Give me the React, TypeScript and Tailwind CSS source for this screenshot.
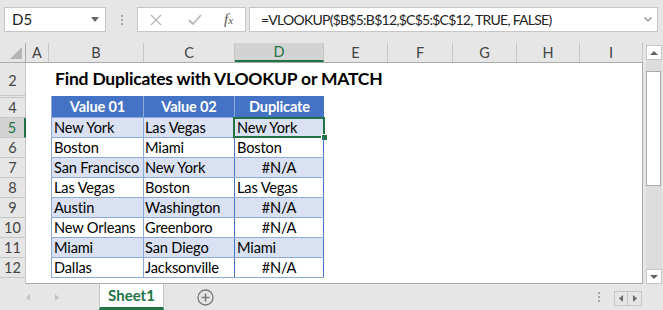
import React from 'react';

type Row = [string, string, string | null];

const rows: Row[] = [
  ['New York', 'Las Vegas', 'New York'],
  ['Boston', 'Miami', 'Boston'],
  ['San Francisco', 'New York', null],
  ['Las Vegas', 'Boston', 'Las Vegas'],
  ['Austin', 'Washington', null],
  ['New Orleans', 'Greenboro', null],
  ['Miami', 'San Diego', 'Miami'],
  ['Dallas', 'Jacksonville', null],
];

const columns = [
  { label: 'A', width: 'w-[23px]' },
  { label: 'B', width: 'w-[95px]' },
  { label: 'C', width: 'w-[91px]' },
  { label: 'D', width: 'w-[89px]' },
  { label: 'E', width: 'w-[64px]' },
  { label: 'F', width: 'w-[65px]' },
  { label: 'G', width: 'w-[64px]' },
  { label: 'H', width: 'w-[63px]' },
  { label: 'I', width: 'w-[63px]' },
];

function FormulaBar() {
  return (
    <div className="h-[43px] flex items-start pt-[7px] pl-[4px] pr-[5px]">
      <div className="w-[102px] h-[25px] bg-white border border-[#c6c6c6] flex items-center justify-between pl-[7px] pr-[6px]">
        <span className="text-[15px] text-[#222]">D5</span>
        <svg width="8" height="5" viewBox="0 0 8 5">
          <path d="M0 0h8L4 5z" fill="#666" />
        </svg>
      </div>
      <div className="w-[31px] h-[25px] flex flex-col items-center justify-center gap-[2px]">
        <span className="w-[2px] h-[2px] bg-[#a6a6a6]" />
        <span className="w-[2px] h-[2px] bg-[#a6a6a6]" />
        <span className="w-[2px] h-[2px] bg-[#a6a6a6]" />
      </div>
      <div className="w-[109px] h-[25px] bg-white border border-[#c6c6c6] flex items-center pl-[12px]">
        <svg width="12" height="12" viewBox="0 0 12 12">
          <path d="M1 1l10 10M11 1L1 11" stroke="#b8b8b8" strokeWidth="1.3" />
        </svg>
        <svg className="ml-[26px]" width="14" height="11" viewBox="0 0 14 11">
          <path d="M1 6l4 4 8-9" stroke="#b8b8b8" strokeWidth="1.8" fill="none" />
        </svg>
        <span className="ml-[22px] font-['Liberation_Serif',serif] italic text-[15px] text-[#555] leading-none">
          f<span className="text-[11px]">x</span>
        </span>
      </div>
      <div className="ml-[3px] flex-1 h-[25px] bg-white border border-[#c6c6c6] flex items-center justify-between pl-[11px] pr-[5px]">
        <span className="text-[14px] text-[#222] tracking-[-0.75px]">=VLOOKUP($B$5:B$12,$C$5:$C$12, TRUE, FALSE)</span>
        <svg width="8" height="5" viewBox="0 0 8 5">
          <path d="M0.5 0.5L4 4l3.5-3.5" stroke="#888" strokeWidth="1.2" fill="none" />
        </svg>
      </div>
    </div>
  );
}

function ColumnHeader() {
  return (
    <div className="h-[20px] flex border-b border-[#ababab]">
      <div className="w-[26px] border-r border-[#ababab] relative">
        <svg className="absolute left-[10px] top-[4px]" width="12" height="12" viewBox="0 0 12 12">
          <path d="M12 0v12H0z" fill="#b4b4b4" />
        </svg>
      </div>
      {columns.map(c => (
        <div
          key={c.label}
          className={`${c.width} flex items-center justify-center text-[14.5px] border-r border-[#c6c6c6] ${
            c.label === 'D'
              ? 'bg-[#d3d3d3] text-[#217346] border-b-2 border-b-[#217346]'
              : 'text-[#444]'
          }`}
        >
          {c.label}
        </div>
      ))}
    </div>
  );
}

function RowHeaders() {
  const labels = ['5', '6', '7', '8', '9', '10', '11', '12'];
  return (
    <div className="w-[26px] flex flex-col text-[14.5px] text-[#444]">
      <div className="h-[33px] border-b border-r border-[#c6c6c6] flex items-end justify-center pb-[3px]">2</div>
      <div className="h-[2px] border-b border-r border-[#c6c6c6]" />
      <div className="h-[20px] border-b border-r border-[#c6c6c6] flex items-center justify-center">4</div>
      {labels.map(l => (
        <div
          key={l}
          className={`h-[20px] border-b border-[#c6c6c6] flex items-center justify-center ${
            l === '5' ? 'bg-[#d3d3d3] text-[#217346] border-r-2 border-r-[#217346]' : 'border-r'
          }`}
        >
          {l}
        </div>
      ))}
      <div className="flex-1 border-r border-[#c6c6c6]" />
    </div>
  );
}

function DataTable() {
  return (
    <div className="ml-[25px] w-[273px] border-l border-[#8ea9db] text-[14.6px] tracking-[-0.15px] text-black">
      <div className="h-[22px] flex bg-[#4472c4] text-white font-bold border-b border-[#8ea9db]">
        <div className="w-[92px] border-r border-[#8ea9db] flex items-center justify-center">Value 01</div>
        <div className="w-[91px] border-r border-[#8ea9db] flex items-center justify-center">Value 02</div>
        <div className="w-[89px] flex items-center justify-center">Duplicate</div>
      </div>
      {rows.map(([b, c, d], i) => (
        <div
          key={i}
          className={`h-[20px] flex border-b border-[#8ea9db] ${i % 2 === 0 ? 'bg-[#d9e1f2]' : 'bg-white'}`}
        >
          <div className="w-[92px] border-r border-[#8ea9db] flex items-center pl-[2px] whitespace-nowrap">{b}</div>
          <div className="w-[91px] border-r border-[#4472c4] flex items-center pl-[1px] whitespace-nowrap">{c}</div>
          <div
            className={`w-[89px] border-r border-[#4472c4] flex items-center relative ${
              d === null ? 'justify-center' : 'pl-[2px]'
            }`}
          >
            {d ?? '#N/A'}
            {i === 0 && (
              <div className="absolute left-[-2px] top-[-1px] w-[92px] h-[21px] border-2 border-[#217346]">
                <div className="absolute right-[-5px] bottom-[-5px] w-[7px] h-[7px] bg-[#217346] border border-white" />
              </div>
            )}
          </div>
        </div>
      ))}
    </div>
  );
}

function VerticalScrollbar() {
  return (
    <div className="ml-[3px] w-[16px] pt-[2px] flex flex-col">
      <div className="h-[15px] bg-white border border-[#c6c6c6] flex items-center justify-center">
        <svg width="8" height="4" viewBox="0 0 8 4">
          <path d="M0 4h8L4 0z" fill="#606060" />
        </svg>
      </div>
      <div className="flex-1 bg-[#dcdcdc] pt-[11px]">
        <div className="w-[15px] h-[115px] bg-white border border-[#ababab]" />
      </div>
      <div className="h-[15px] bg-white border border-[#c6c6c6] flex items-center justify-center">
        <svg width="8" height="4" viewBox="0 0 8 4">
          <path d="M0 0h8L4 4z" fill="#606060" />
        </svg>
      </div>
    </div>
  );
}

function TabBar() {
  return (
    <div className="flex-1 flex items-start">
      <div className="w-[99px] h-[26px] flex items-center">
        <svg className="ml-[26px]" width="4" height="7" viewBox="0 0 4 7">
          <path d="M4 0v7L0 3.5z" fill="#c3c3c3" />
        </svg>
        <svg className="ml-[25px]" width="4" height="7" viewBox="0 0 4 7">
          <path d="M0 0v7l4-3.5z" fill="#c3c3c3" />
        </svg>
      </div>
      <div className="w-[65px] h-[26px] bg-white border-x border-[#c6c6c6] border-b-[3px] border-b-[#217346] flex items-center justify-center font-bold text-[15px] text-[#217346]">
        Sheet1
      </div>
      <div className="ml-[33px] h-[26px] flex items-center">
        <svg width="17" height="17" viewBox="0 0 17 17">
          <circle cx="8.5" cy="8.5" r="7.5" stroke="#7a7a7a" strokeWidth="1.3" fill="none" />
          <path d="M8.5 4.5v8M4.5 8.5h8" stroke="#7a7a7a" strokeWidth="1.5" />
        </svg>
      </div>
      <div className="flex-1" />
      <div className="h-[26px] flex items-center gap-[2px] flex-col justify-center mr-[14px]">
        <span className="w-[2px] h-[2px] bg-[#a6a6a6]" />
        <span className="w-[2px] h-[2px] bg-[#a6a6a6]" />
        <span className="w-[2px] h-[2px] bg-[#a6a6a6]" />
      </div>
      <div className="mt-[7px] flex mr-[21px]">
        <div className="w-[14px] h-[15px] border border-[#c6c6c6] flex items-center justify-center">
          <svg width="4" height="7" viewBox="0 0 4 7">
            <path d="M4 0v7L0 3.5z" fill="#6a6a6a" />
          </svg>
        </div>
        <div className="w-[14px] h-[15px] border border-l-0 border-[#c6c6c6] flex items-center justify-center">
          <svg width="4" height="7" viewBox="0 0 4 7">
            <path d="M0 0v7l4-3.5z" fill="#6a6a6a" />
          </svg>
        </div>
      </div>
    </div>
  );
}

export default function App() {
  return (
    <div className="w-[663px] h-[310px] bg-[#e6e6e6] flex flex-col overflow-hidden font-['Lato',sans-serif]">
      <FormulaBar />
      <div className="h-[241px] flex">
        <div className="w-[643px] flex flex-col">
          <ColumnHeader />
          <div className="flex-1 flex">
            <RowHeaders />
            <div className="w-[617px] bg-white border-r border-b border-[#ababab] flex flex-col">
              <div className="h-[33px] flex items-end pl-[29px] pb-[6px]">
                <span className="font-bold text-[17.5px] tracking-[-0.2px] leading-[22px] text-black whitespace-nowrap">
                  Find Duplicates with VLOOKUP or MATCH
                </span>
              </div>
              <DataTable />
            </div>
          </div>
        </div>
        <VerticalScrollbar />
      </div>
      <TabBar />
    </div>
  );
}
